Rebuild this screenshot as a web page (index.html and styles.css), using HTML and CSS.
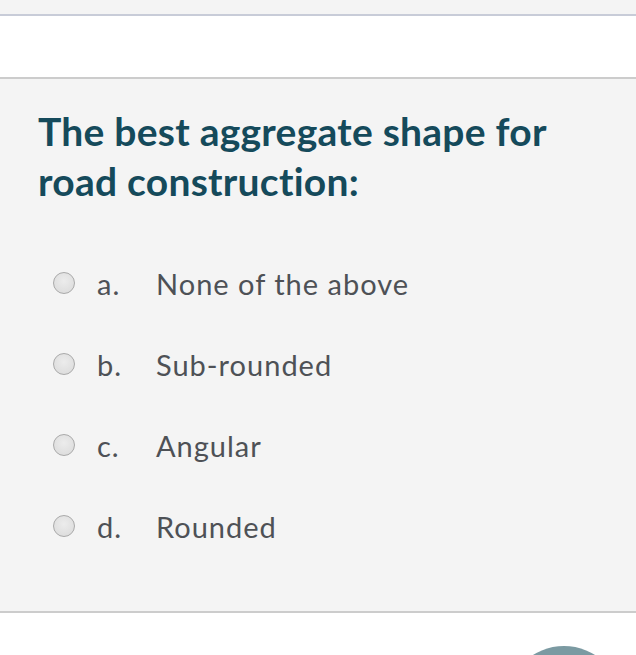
FILE: index.html
```html
<!DOCTYPE html>
<html>
<head>
<meta charset="utf-8">
<link rel="stylesheet" href="styles.css">
</head>
<body>
<div class="topbar"></div>
<div class="whiteband"></div>
<section class="question">
  <h2 class="qtext">The best aggregate shape for road construction:</h2>
  <div class="answers">
    <label class="opt"><span class="radio"></span><span class="letter">a.</span><span class="label">None of the above</span></label>
    <label class="opt"><span class="radio"></span><span class="letter">b.</span><span class="label">Sub-rounded</span></label>
    <label class="opt"><span class="radio"></span><span class="letter">c.</span><span class="label">Angular</span></label>
    <label class="opt"><span class="radio"></span><span class="letter">d.</span><span class="label">Rounded</span></label>
  </div>
</section>
<div class="footer">
  <span class="fab"></span>
</div>
</body>
</html>
```
FILE: styles.css
```css
html, body {
  margin: 0;
  padding: 0;
}
body {
  width: 636px;
  height: 655px;
  overflow: hidden;
  background: #ffffff;
  font-family: Lato, "Open Sans", sans-serif;
}
.topbar {
  height: 14px;
  background: #f4f4f4;
  border-bottom: 2px solid #c8ccd8;
}
.whiteband {
  height: 61px;
  background: #ffffff;
  border-bottom: 2px solid #cccccc;
}
.question {
  background: #f4f4f4;
  height: 532px;
  border-bottom: 2px solid #cccccc;
  padding: 0 20px 0 38px;
  box-sizing: content-box;
}
.qtext {
  margin: 0;
  width: 530px;
  padding-top: 27px;
  font-size: 39px;
  line-height: 50px;
  font-weight: 700;
  color: #154a5b;
  letter-spacing: 0.25px;
}
.answers {
  display: flex;
  flex-direction: column;
  gap: 41px;
  padding-top: 57px;
  padding-left: 15px;
}
.opt {
  display: flex;
  align-items: center;
  height: 40px;
  font-size: 29px;
  letter-spacing: 1px;
  color: #4e5156;
}
.radio {
  width: 22px;
  height: 22px;
  box-sizing: border-box;
  border-radius: 50%;
  border: 1px solid #a9a9a9;
  background: radial-gradient(circle at 50% 40%, #ececec, #d9d9d9);
  margin-right: 22px;
  flex: none;
}
.letter {
  width: 59px;
  flex: none;
}
.footer {
  position: relative;
  height: 42px;
  overflow: hidden;
  background: #ffffff;
}
.fab {
  position: absolute;
  left: 506px;
  top: 33px;
  width: 116px;
  height: 116px;
  border-radius: 50%;
  background: #7b9aa2;
}
```
